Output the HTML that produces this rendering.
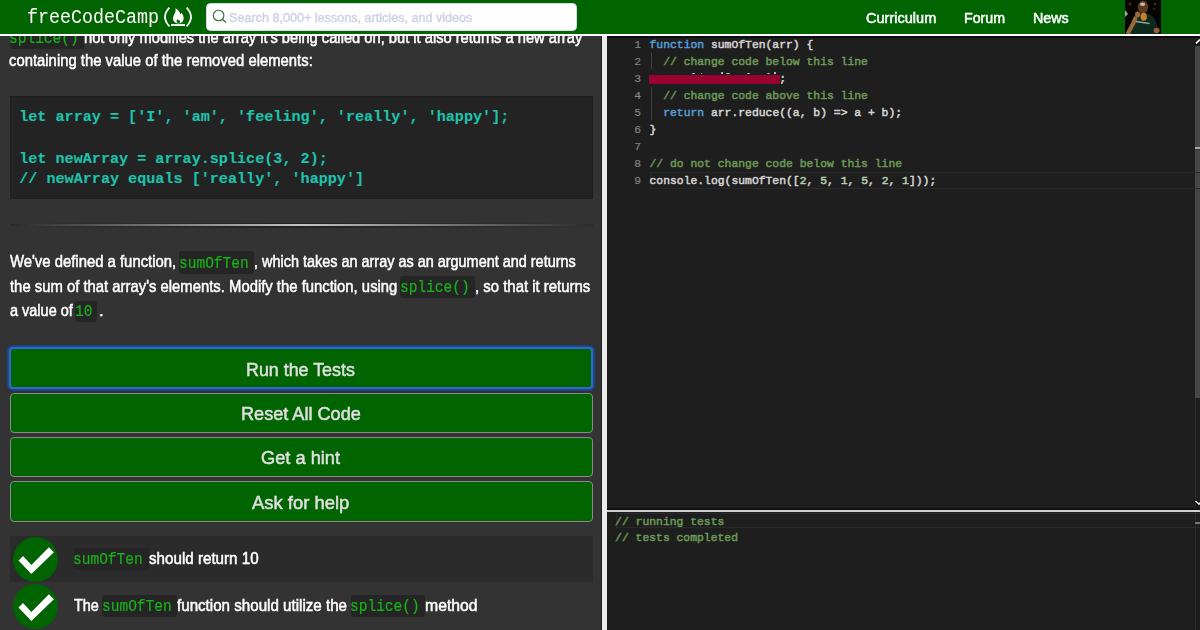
<!DOCTYPE html>
<html><head><meta charset="utf-8">
<style>
*{box-sizing:border-box;margin:0;padding:0}
html,body{width:1200px;height:630px;overflow:hidden;background:#333;font-family:"Liberation Sans",sans-serif}
.s{position:absolute;white-space:pre;line-height:1;-webkit-text-stroke:0.5px}
.abs{position:absolute}
.chip{position:absolute;background:#252525;border-radius:3px}
.ln{left:600px;width:41px;text-align:right;font-family:"Liberation Mono",monospace;font-size:11.38px;color:#858585;-webkit-text-stroke:0.15px}
#hdr{position:absolute;left:0;top:0;width:1200px;height:33.6px;background:#006400}
#hdrline{position:absolute;left:0;top:33.6px;width:1200px;height:2.6px;background:#fff}
#search{position:absolute;left:205.8px;top:2.9px;width:371.2px;height:28.3px;background:#fff;border-radius:4.5px;border:1px solid #d8d8ec}
#avatar{position:absolute;left:1125.4px;top:0;width:35.3px;height:33.6px;background:#070605;overflow:hidden}
#codeblk{position:absolute;left:9.5px;top:95.7px;width:583.5px;height:103px;background:#232323;border:1px solid #1e1e1e}
#hr{position:absolute;left:9.5px;top:222.6px;width:583.5px;height:5px;background:linear-gradient(90deg,#333,#222 50%,#333)}
#hr2{position:absolute;left:9.5px;top:223.9px;width:583.5px;height:2.4px;background:linear-gradient(90deg,#2a2a2a,#c4c4c4 50%,#2a2a2a)}
.btn{position:absolute;left:9.5px;width:583.5px;background:#006400;border:1.5px solid #8a8a8a;border-radius:4px}
.btn.focus{border:2.5px solid #3068c6;box-shadow:0 0 0 1.6px #1d4a98, 0 0 1.5px 2px rgba(20,60,140,.5)}
#trow{position:absolute;left:9.5px;top:535.8px;width:583.5px;height:46.6px;background:#2b2b2b}
.chk{position:absolute;left:13.3px;width:45px;height:45px;border-radius:50%;background:#006400}
#vdiv{position:absolute;left:601.2px;top:36.2px;width:6.1px;height:594px;background:#ececec;border-left:0.6px solid #222}
#editor{position:absolute;left:607.3px;top:36.2px;width:592.7px;height:472px;background:#1e1e1e}
#console{position:absolute;left:607.3px;top:512px;width:592.7px;height:118px;background:#1e1e1e}
#hdiv{position:absolute;left:607.3px;top:509.9px;width:592.7px;height:2.1px;background:#d0d0d0}
</style></head><body>
<div id="codeblk"></div>
<div id="hr"></div><div id="hr2"></div>
<div class="btn focus" style="left:9.1px;width:584.4px;top:347.3px;height:41.6px"></div>
<div class="btn" style="top:392.9px;height:40.4px"></div>
<div class="btn" style="top:436.8px;height:40.7px"></div>
<div class="btn" style="top:481.3px;height:40.7px"></div>
<div id="trow"></div>
<div class="chk" style="top:536.5px"><svg width="45" height="45" viewBox="0 0 45 45"><path d="M5.5 23.5 L18.4 37 L40.9 15.2 L35.9 10.2 L18.4 28 L10 19 Z" fill="#fff"/></svg></div>
<div class="chk" style="top:583.5px"><svg width="45" height="45" viewBox="0 0 45 45"><path d="M5.5 23.5 L18.4 37 L40.9 15.2 L35.9 10.2 L18.4 28 L10 19 Z" fill="#fff"/></svg></div>
<div id="vdiv"></div>
<div id="editor"></div>
<div id="hdiv"></div>
<div id="console"></div>
<div class="abs" style="left:607.3px;top:35.9px;width:592.7px;height:2px;background:#0e0e0e"></div>
<div class="abs" style="left:607.3px;top:507.6px;width:592.7px;height:2.3px;background:#111"></div>
<div class="abs" style="left:1194.8px;top:46px;width:5.2px;height:352.2px;background:#464646"></div>
<div class="abs" style="left:1194.8px;top:398.2px;width:1.3px;height:108px;background:#2c2c2c"></div>
<div class="abs" style="left:1195px;top:147.1px;width:5px;height:1.7px;background:#a8a8a8"></div><div class="abs" style="left:1195px;top:148.8px;width:5px;height:1px;background:#333"></div>
<svg class="abs" style="left:1192px;top:37px" width="8" height="10"><path d="M3.5 7 L8 2.5" stroke="#0a0a0a" stroke-width="4"/><path d="M4 6.5 L8 2.5" stroke="#eee" stroke-width="1.8"/></svg>
<svg class="abs" style="left:1192px;top:499px" width="8" height="8"><path d="M3 1.5 L7 5.5 L9 3.5" stroke="#0a0a0a" stroke-width="3.5" fill="none"/><path d="M3.5 2 L7 5.2 L9 3.2" stroke="#eee" stroke-width="1.6" fill="none"/></svg>
<div class="abs" style="left:1195px;top:512px;width:1px;height:118px;background:#2a2a2a"></div>
<div class="abs" style="left:1195px;top:522.3px;width:5px;height:1.6px;background:#777"></div>
<div class="abs" style="left:616.3px;top:512.9px;width:584px;height:15.3px;border:1px solid #2a2a2a;border-right:none"></div>
<div class="abs" style="left:650.4px;top:172.4px;width:550px;height:16.4px;border:1px solid #2a2a2a;border-right:none"></div>
<div class="abs" style="left:650.5px;top:52.5px;width:1px;height:16px;background:#404040"></div>
<div class="abs" style="left:650.5px;top:86.5px;width:1px;height:33.5px;background:#404040"></div>
<div class="chip" style="left:9.70px;top:26.50px;width:74.76px;height:22.20px"></div>
<div class="chip" style="left:179.00px;top:251.25px;width:74.76px;height:22.50px"></div>
<div class="chip" style="left:400.20px;top:276.40px;width:74.76px;height:21.50px"></div>
<div class="chip" style="left:75.00px;top:300.60px;width:22.44px;height:21.50px"></div>
<div class="chip" style="left:73.80px;top:548.30px;width:74.76px;height:21.40px"></div>
<div class="chip" style="left:102.20px;top:595.00px;width:74.76px;height:22.00px"></div>
<div class="chip" style="left:350.70px;top:595.00px;width:74.76px;height:22.00px"></div>
<div class="s" style="left:84.09px;top:28.90px;font-family:'Liberation Sans';font-size:16.2px;color:#fff;transform:scaleX(0.9071);transform-origin:0 0;">not only modifies the array it's being called on, but it also returns a new array</div>
<div class="s" style="left:9.30px;top:52.10px;font-family:'Liberation Sans';font-size:16.2px;color:#fff;transform:scaleX(0.9173);transform-origin:0 0;">containing the value of the removed elements:</div>
<div class="s" style="left:9.50px;top:253.30px;font-family:'Liberation Sans';font-size:16.2px;color:#fff;transform:scaleX(0.9183);transform-origin:0 0;">We've defined a function,</div>
<div class="s" style="left:254.11px;top:253.30px;font-family:'Liberation Sans';font-size:16.2px;color:#fff;transform:scaleX(0.8917);transform-origin:0 0;">, which takes an array as an argument and returns</div>
<div class="s" style="left:9.50px;top:277.70px;font-family:'Liberation Sans';font-size:16.2px;color:#fff;transform:scaleX(0.9171);transform-origin:0 0;">the sum of that array's elements. Modify the function, using</div>
<div class="s" style="left:475.38px;top:277.70px;font-family:'Liberation Sans';font-size:16.2px;color:#fff;transform:scaleX(0.9218);transform-origin:0 0;">, so that it returns</div>
<div class="s" style="left:9.50px;top:302.10px;font-family:'Liberation Sans';font-size:16.2px;color:#fff;transform:scaleX(0.8944);transform-origin:0 0;">a value of</div>
<div class="s" style="left:99.00px;top:302.10px;font-family:'Liberation Sans';font-size:16.2px;color:#fff;transform:scaleX(1.0000);transform-origin:0 0;">.</div>
<div class="s" style="left:245.96px;top:359.70px;font-family:'Liberation Sans';font-size:19px;color:#e0e0e0;transform:scaleX(0.9400);transform-origin:0 0;">Run the Tests</div>
<div class="s" style="left:241.15px;top:404.00px;font-family:'Liberation Sans';font-size:19px;color:#e0e0e0;transform:scaleX(0.9532);transform-origin:0 0;">Reset All Code</div>
<div class="s" style="left:260.64px;top:448.40px;font-family:'Liberation Sans';font-size:19px;color:#e0e0e0;transform:scaleX(0.9598);transform-origin:0 0;">Get a hint</div>
<div class="s" style="left:252.40px;top:492.70px;font-family:'Liberation Sans';font-size:19px;color:#e0e0e0;transform:scaleX(0.9700);transform-origin:0 0;">Ask for help</div>
<div class="s" style="left:149.40px;top:549.90px;font-family:'Liberation Sans';font-size:16.2px;color:#fff;transform:scaleX(0.9368);transform-origin:0 0;">should return 10</div>
<div class="s" style="left:73.60px;top:596.80px;font-family:'Liberation Sans';font-size:16.2px;color:#fff;transform:scaleX(0.8929);transform-origin:0 0;">The</div>
<div class="s" style="left:177.40px;top:596.80px;font-family:'Liberation Sans';font-size:16.2px;color:#fff;transform:scaleX(0.9354);transform-origin:0 0;">function should utilize the</div>
<div class="s" style="left:425.32px;top:596.80px;font-family:'Liberation Sans';font-size:16.2px;color:#fff;transform:scaleX(0.9750);transform-origin:0 0;">method</div>
<div class="s" style="left:9.21px;top:30.90px;font-family:'Liberation Mono';font-size:16.4px;color:#17b317;transform:scaleX(0.8862);transform-origin:0 0;-webkit-text-stroke:0.2px;">splice()</div>
<div class="s" style="left:178.51px;top:255.50px;font-family:'Liberation Mono';font-size:16.4px;color:#17b317;transform:scaleX(0.8862);transform-origin:0 0;-webkit-text-stroke:0.2px;">sumOfTen</div>
<div class="s" style="left:399.71px;top:279.70px;font-family:'Liberation Mono';font-size:16.4px;color:#17b317;transform:scaleX(0.8862);transform-origin:0 0;-webkit-text-stroke:0.2px;">splice()</div>
<div class="s" style="left:74.51px;top:304.10px;font-family:'Liberation Mono';font-size:16.4px;color:#17b317;transform:scaleX(0.8862);transform-origin:0 0;-webkit-text-stroke:0.2px;">10</div>
<div class="s" style="left:73.31px;top:551.90px;font-family:'Liberation Mono';font-size:16.4px;color:#17b317;transform:scaleX(0.8862);transform-origin:0 0;-webkit-text-stroke:0.2px;">sumOfTen</div>
<div class="s" style="left:101.71px;top:598.80px;font-family:'Liberation Mono';font-size:16.4px;color:#17b317;transform:scaleX(0.8862);transform-origin:0 0;-webkit-text-stroke:0.2px;">sumOfTen</div>
<div class="s" style="left:350.21px;top:598.80px;font-family:'Liberation Mono';font-size:16.4px;color:#17b317;transform:scaleX(0.8862);transform-origin:0 0;-webkit-text-stroke:0.2px;">splice()</div>
<div class="s" style="left:19.20px;top:110.20px;font-family:'Liberation Mono';font-size:15.14px;font-weight:bold;color:#1cc4ae;-webkit-text-stroke:0.1px;">let array = ['I', 'am', 'feeling', 'really', 'happy'];</div>
<div class="s" style="left:19.20px;top:151.90px;font-family:'Liberation Mono';font-size:15.14px;font-weight:bold;color:#1cc4ae;-webkit-text-stroke:0.1px;">let newArray = array.splice(3, 2);</div>
<div class="s" style="left:19.20px;top:172.30px;font-family:'Liberation Mono';font-size:15.14px;font-weight:bold;color:#1cc4ae;-webkit-text-stroke:0.1px;">// newArray equals ['really', 'happy']</div>
<div class="s ln" style="top:40.30px">1</div>
<div class="s" style="left:649.50px;top:40.30px;font-family:'Liberation Mono';font-size:11.38px;color:#d4d4d4;"><span style="color:#569cd6">function</span> sumOfTen(arr) {</div>
<div class="s ln" style="top:57.26px">2</div>
<div class="s" style="left:649.50px;top:57.26px;font-family:'Liberation Mono';font-size:11.38px;color:#d4d4d4;">  <span style="color:#6a9955">// change code below this line</span></div>
<div class="s ln" style="top:74.22px">3</div>
<div class="s" style="left:649.50px;top:74.22px;font-family:'Liberation Mono';font-size:11.38px;color:#d4d4d4;">                   ;</div>
<div class="s ln" style="top:91.18px">4</div>
<div class="s" style="left:649.50px;top:91.18px;font-family:'Liberation Mono';font-size:11.38px;color:#d4d4d4;">  <span style="color:#6a9955">// change code above this line</span></div>
<div class="s ln" style="top:108.14px">5</div>
<div class="s" style="left:649.50px;top:108.14px;font-family:'Liberation Mono';font-size:11.38px;color:#d4d4d4;">  <span style="color:#569cd6">return</span> arr.reduce((a, b) =&gt; a + b);</div>
<div class="s ln" style="top:125.10px">6</div>
<div class="s" style="left:649.50px;top:125.10px;font-family:'Liberation Mono';font-size:11.38px;color:#d4d4d4;">}</div>
<div class="s ln" style="top:142.06px">7</div>
<div class="s ln" style="top:159.02px">8</div>
<div class="s" style="left:649.50px;top:159.02px;font-family:'Liberation Mono';font-size:11.38px;color:#d4d4d4;"><span style="color:#6a9955">// do not change code below this line</span></div>
<div class="s ln" style="top:175.98px">9</div>
<div class="s" style="left:649.50px;top:175.98px;font-family:'Liberation Mono';font-size:11.38px;color:#d4d4d4;">console.log(sumOfTen([<span style="color:#b5cea8">2</span>, <span style="color:#b5cea8">5</span>, <span style="color:#b5cea8">1</span>, <span style="color:#b5cea8">5</span>, <span style="color:#b5cea8">2</span>, <span style="color:#b5cea8">1</span>]));</div>
<div class="s" style="left:615.10px;top:516.50px;font-family:'Liberation Mono';font-size:11.38px;color:#6a9955;">// running tests</div>
<div class="s" style="left:615.10px;top:533.40px;font-family:'Liberation Mono';font-size:11.38px;color:#6a9955;">// tests completed</div>
<div class="abs" style="left:691.5px;top:72.6px;width:3.5px;height:2px;background:#cfcfcf;border-radius:1px"></div>
<div class="abs" style="left:700.6px;top:72.8px;width:1.8px;height:1.8px;background:#cfcfcf;border-radius:1px"></div>
<div class="abs" style="left:720.8px;top:72.4px;width:2.2px;height:2.2px;background:#cfcfcf;border-radius:1px"></div>
<div class="abs" style="left:726.2px;top:72.8px;width:3.6px;height:1.8px;background:#a8c8a0;border-radius:1px"></div>
<div class="abs" style="left:746.6px;top:72.8px;width:3.8px;height:1.8px;background:#a8c8a0;border-radius:1px"></div>
<div class="abs" style="left:766.6px;top:72.8px;width:3.8px;height:1.8px;background:#a8c8a0;border-radius:1px"></div>
<div class="abs" style="left:774.2px;top:72.4px;width:2.2px;height:2.2px;background:#cfcfcf;border-radius:1px"></div>
<div class="abs" style="left:648.2px;top:73.5px;width:133.3px;height:11.7px;background:#9a0030;border:0.8px solid #0c2424"></div>
<div id="hdr"></div>
<div id="hdrline"></div>
<div id="search"></div>
<svg class="abs" style="left:210px;top:7px" width="20" height="20" viewBox="0 0 20 20"><circle cx="8.6" cy="8.5" r="5.3" stroke="#2f6b2f" stroke-width="1.1" fill="none"/><path d="M12.4 12.3 L16 15.5" stroke="#2f6b2f" stroke-width="1.2"/></svg>
<div id="avatar"><svg width="36" height="34" viewBox="0 0 36 34"><defs><filter id="bl" x="-10%" y="-10%" width="120%" height="120%"><feGaussianBlur stdDeviation="0.7"/></filter></defs><rect width="36" height="34" fill="#050403"/><g filter="url(#bl)"><circle cx="5" cy="4" r="1.5" fill="#4a2a18"/><circle cx="30" cy="4" r="1.3" fill="#4a2a18"/><circle cx="29" cy="9" r="1.2" fill="#3a2010"/><path d="M4 34 C4 22 8 13 18 12.5 C29 13 33 22 33 34 Z" fill="#0c2a1e"/><ellipse cx="18" cy="7" rx="5.2" ry="6.5" fill="#5a3a20"/><ellipse cx="17.6" cy="4.2" rx="2.6" ry="1.8" fill="#cdb8a8"/><path d="M2.5 34 L8 24 L11 17" stroke="#9c6838" stroke-width="4" fill="none"/><ellipse cx="12.5" cy="14.5" rx="2.5" ry="3" fill="#9c6838"/><ellipse cx="18.7" cy="16.8" rx="3.2" ry="4" fill="#c4802c"/><path d="M11 21.5 L24.5 23.5" stroke="#8aa2a0" stroke-width="1.3"/><ellipse cx="31.6" cy="30.5" rx="3" ry="2.8" fill="#94603a"/><path d="M0 10 L3 14 L0 17 Z" fill="#aaa"/></g></svg></div>
<div class="s" style="left:866.40px;top:10.80px;font-family:'Liberation Sans';font-size:14.6px;color:#fff;transform:scaleX(0.9957);transform-origin:0 0;">Curriculum</div>
<div class="s" style="left:964.02px;top:10.80px;font-family:'Liberation Sans';font-size:14.6px;color:#fff;transform:scaleX(0.9756);transform-origin:0 0;">Forum</div>
<div class="s" style="left:1033.02px;top:10.80px;font-family:'Liberation Sans';font-size:14.6px;color:#fff;transform:scaleX(0.9800);transform-origin:0 0;">News</div>
<div class="s" style="left:229.43px;top:10.90px;font-family:'Liberation Sans';font-size:13px;color:#cfd3e8;transform:scaleX(0.9692);transform-origin:0 0;">Search 8,000+ lessons, articles, and videos</div>
<div class="s" style="left:27.3px;top:7.70px;font-family:'Liberation Mono';font-size:20px;color:#fff;-webkit-text-stroke:0;transform:scaleX(0.917);transform-origin:0 0">freeCodeCamp</div>

<svg class="abs" style="left:160px;top:4px" width="40" height="26" viewBox="0 0 40 26"><path d="M9.4 3.6 Q0.6 12.9 9.4 22.3" stroke="#fff" stroke-width="1.75" fill="none"/><path d="M26.6 3.6 Q35.4 12.9 26.6 22.3" stroke="#fff" stroke-width="1.75" fill="none"/><path fill-rule="evenodd" fill="#fff" d="M16.6 19.2 C13.6 18.3 12.6 15.6 13.1 13.2 C13.8 10.2 16.6 8 15.3 4.2 C18.6 5.8 20.1 8.2 20.3 10.6 C20.9 10 21.1 9.2 21.1 8.6 C23.1 10.6 23.9 13.1 23.6 15.1 C23.2 17.6 21.6 18.9 20.1 19.2 Z M17.2 18.8 C16.3 17.8 16.4 16.4 17.7 15 C18 16 18.6 16.6 19.1 16.1 C20.2 17 20.3 18.1 19.6 18.9 Z"/><rect x="11" y="20.1" width="14" height="1.9" fill="#fff"/></svg>
</body></html>
